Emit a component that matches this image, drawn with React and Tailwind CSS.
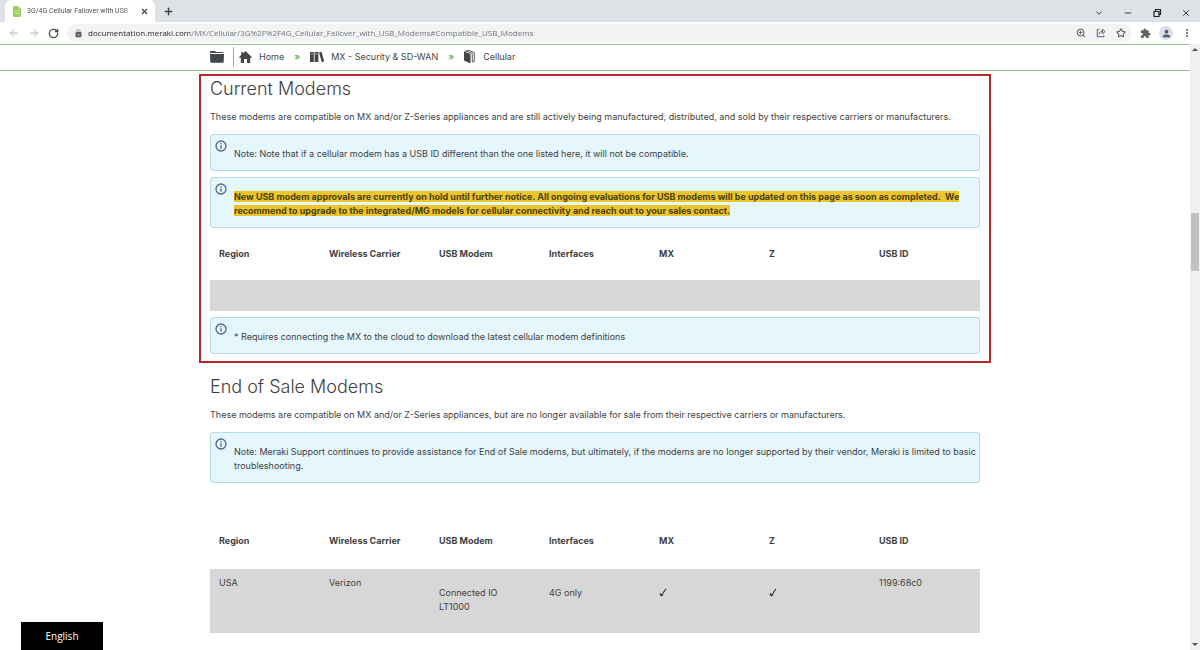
import {
  ArrowLeft,
  ArrowRight,
  RotateCw,
  X,
  Plus,
  Minus,
  ChevronDown,
  Star,
  ZoomIn
} from "lucide-react";
import { MdLock, MdExtension, MdPerson, MdMoreVert } from "react-icons/md";

const COLUMNS = ["Region", "Wireless Carrier", "USB Modem", "Interfaces", "MX", "Z", "USB ID"];

function TabStrip() {
  return (
    <div className="flex h-[22px] items-end justify-between bg-[#dee1e6] pl-[5px]">
      <div className="flex items-center">
        <div className="flex h-[22px] w-[150px] items-center rounded-t-md bg-white pl-2 pr-1.5">
          <svg viewBox="0 0 8 11" className="h-[11px] w-2 shrink-0" aria-hidden="true">
            <path d="M1 0h4.5L8 2.5V10a1 1 0 0 1-1 1H1a1 1 0 0 1-1-1V1a1 1 0 0 1 1-1z" fill="#9bcf62" />
            <path d="M5.5 0 8 2.5H5.5z" fill="#d3ecb8" />
            <path d="M1.5 5h5M1.5 7.5h5" stroke="#c9e8a8" strokeWidth="1" />
          </svg>
          <span className="ml-1.5 flex-1 whitespace-nowrap bg-[linear-gradient(90deg,#45494d_85%,#c4c6c8)] bg-clip-text font-[Roboto,sans-serif] text-[7px] text-transparent">
            3G/4G Cellular Failover with USB
          </span>
          <button aria-label="Close tab" className="ml-1 text-[#3c4043]">
            <X size={9} strokeWidth={3} />
          </button>
        </div>
        <button aria-label="New tab" className="ml-2 text-[#3c4043]">
          <Plus size={11} strokeWidth={3} />
        </button>
      </div>

      <div className="flex h-[18px] items-center gap-[19px] pr-[9px] text-[#222]">
        <button aria-label="Search tabs">
          <ChevronDown size={10} strokeWidth={2} />
        </button>
        <button aria-label="Minimize">
          <Minus size={10} strokeWidth={2} />
        </button>
        <button aria-label="Restore">
          <svg viewBox="0 0 10 10" className="size-[10px]" fill="none" stroke="currentColor" aria-hidden="true">
            <path d="M2 3.5h5v5H2zM3.5 3.5V1.5h5v5H7" strokeWidth="1.2" />
          </svg>
        </button>
        <button aria-label="Close window">
          <X size={10} strokeWidth={2} />
        </button>
      </div>
    </div>
  );
}

function Toolbar() {
  return (
    <div className="flex h-[22px] items-center bg-white pl-2 pr-[7px]">
      <div className="flex items-center gap-2">
        <button aria-label="Back" className="text-[#b5b7ba]">
          <ArrowLeft size={12} strokeWidth={2} />
        </button>
        <button aria-label="Forward" className="text-[#b5b7ba]">
          <ArrowRight size={12} strokeWidth={2} />
        </button>
        <button aria-label="Reload" className="text-[#4a4d51]">
          <RotateCw size={11} strokeWidth={3} />
        </button>
      </div>

      <div className="ml-2 flex h-[18px] flex-1 items-center rounded-full bg-[#f1f3f4] pl-[7px] pr-1.5 text-[#5f6368]">
        <MdLock size={9} />
        <input
          type="text"
          aria-label="Address"
          defaultValue="documentation.meraki.com/MX/Cellular/3G%2F%2F4G_Cellular_Failover_with_USB_Modems#Compatible_USB_Modems"
          className="ml-[5px] min-w-0 flex-1 bg-[linear-gradient(90deg,#202124_102px,#6a6e73_102px)] bg-clip-text font-['Open_Sans',sans-serif] text-[8px] text-transparent outline-none"
        />
        <div className="flex items-center gap-[10px]">
          <button aria-label="Zoom">
            <ZoomIn size={10} strokeWidth={2.5} />
          </button>
          <button aria-label="Share">
            <svg viewBox="0 0 12 12" className="size-[10px]" fill="none" stroke="currentColor" strokeWidth="1.2" aria-hidden="true">
              <path d="M4 2H1.5v8.500h8V8.500M3.500 7.500c.5-2.500 2-3.500 4.500-3.500M7.500 1.500 11 4.200 7.500 7z" />
            </svg>
          </button>
          <button aria-label="Bookmark">
            <Star size={10} strokeWidth={2.5} />
          </button>
        </div>
      </div>

      <div className="ml-2 flex items-center gap-2 text-[#5f6368]">
        <button aria-label="Extensions">
          <MdExtension size={11} />
        </button>
        <button aria-label="Profile" className="flex size-3.5 items-center justify-center rounded-full bg-[#dadfe8] text-[#4a5a78]">
          <MdPerson size={11} />
        </button>
        <button aria-label="Menu">
          <MdMoreVert size={12} />
        </button>
      </div>
    </div>
  );
}

function Separator() {
  return <span className="mx-[9px] px-px text-[9px] font-bold text-[#6cc04a]" aria-hidden="true">»</span>;
}

function Breadcrumbs() {
  return (
    <nav aria-label="Breadcrumb" className="border-y border-[#9dbf8b] bg-white">
      <div className="mx-auto flex h-[25px] max-w-[770px] items-center pb-0.5 text-[#444749]">
        <button aria-label="Contents" className="flex h-5 items-center border-r border-[#8cc07a] pr-[9px]">
          <svg viewBox="0 0 14 12" className="h-3 w-3.5" fill="#444749" aria-hidden="true">
            <path d="M0 2V1A1 1 0 0 1 1 0h4l1 1h6.500a1 1 0 0 1 1 1zM0 3h14l-.3 8a.8.8 0 0 1-.8.800H1.100a.8.8 0 0 1-.8-.8z" />
          </svg>
        </button>
        <a href="#home" className="ml-[5px] flex items-center gap-[7px]">
          <svg viewBox="0 0 13 12" className="h-3 w-[13px]" fill="#444749" aria-hidden="true">
            <path d="M6.500 0 13 6.200l-.8.900L11.200 6.500V12H8V8H5v4H1.800V6.500l-1 .6L0 6.200 2.200 4V1h1.600v1.500z" />
          </svg>
          Home
        </a>
        <Separator />
        <a href="#mx" className="flex items-center gap-[7px]">
          <svg viewBox="0 0 14 12" className="h-3 w-3.5" fill="#444749" aria-hidden="true">
            <path d="M0 1h3.800v10H0zM4.600 1h3.800v10H4.600zM9 1.600l2.500-.8L14.300 10.500l-2.500.8z" />
            <path d="M.8 3h2.200M5.400 3h2.200" stroke="#fff" strokeWidth=".6" />
          </svg>
          MX - Security &amp; SD-WAN
        </a>
        <Separator />
        <a href="#cellular" className="flex items-center gap-2">
          <svg viewBox="0 0 11 14" className="h-3.5 w-[11px]" aria-hidden="true">
            <path d="M0 1.500 6.500 4v9.500L0 10.500z" fill="#444749" />
            <path d="M.5 1.200 4.500.500 10.300 2.500V11.500L8.500 12M2.500 1.200 8.300 3.500V12" fill="none" stroke="#444749" strokeWidth=".9" />
          </svg>
          Cellular
        </a>
      </div>
    </nav>
  );
}

function Note({ children, className = "" }) {
  return (
    <div className={`flex rounded-[3px] border border-[#b5dce6] bg-[#e5f6fd] pb-[9px] pl-1 ${className}`}>
      <svg viewBox="0 0 12 12" className="mt-[5px] size-3 shrink-0" fill="none" stroke="#4a6a86" aria-hidden="true">
        <circle cx="6" cy="6" r="5" strokeWidth="1.300" />
        <path d="M6 5.200v3.600M6 3v1.300" strokeWidth="1.300" />
      </svg>
      <p className="ml-[7px] pt-3">{children}</p>
    </div>
  );
}

function ModemTable({ label, headHeight, children }) {
  return (
    <table aria-label={label} className="w-full table-fixed border-collapse text-left">
      <thead>
        <tr className={headHeight}>
          {COLUMNS.map((name) => (
            <th key={name} scope="col" className="pl-[9px] align-middle font-bold">
              {name}
            </th>
          ))}
        </tr>
      </thead>
      <tbody className="bg-[#d7d7d7]">{children}</tbody>
    </table>
  );
}

function Check() {
  return (
    <svg viewBox="0 0 8 9" className="mt-0.5 h-[9px] w-2" fill="none" stroke="#333" role="img" aria-label="Yes">
      <path d="M1 5.500 2.800 8" strokeWidth="1.600" />
      <path d="M2.800 8C3.800 5 5 3 7 .8" strokeWidth="1.100" />
    </svg>
  );
}

function ScrollBar() {
  return (
    <div className="flex w-2.5 shrink-0 flex-col items-center justify-between bg-[#f1f1f1] py-1" aria-hidden="true">
      <span className="border-x-[3px] border-b-[3px] border-x-transparent border-b-[#505050]" />
      <span className="mb-[210px] h-[58px] w-2 bg-[#c1c1c1]" />
      <span className="border-x-[3px] border-t-[3px] border-x-transparent border-t-[#505050]" />
    </div>
  );
}

export default function App() {
  return (
    <div className="relative flex h-screen flex-col overflow-hidden bg-white font-[Inter,sans-serif] text-[9px] leading-[14px] text-[#3e4143]">
      <TabStrip />
      <Toolbar />

      <div className="flex min-h-0 flex-1">
        <div className="min-w-0 flex-1">
          <Breadcrumbs />

          <main className="mx-auto mt-[3px] max-w-[792px]">
            {/* Current modems */}
            <section className="border-2 border-[#b5272d] px-[9px] pb-[7px] pt-px">
              <h2 className="text-[18px] font-light leading-6">Current Modems</h2>
              <p className="mt-[9px]">
                These modems are compatible on MX and/or Z-Series appliances and are still actively being manufactured, distributed, and sold by their respective carriers or manufacturers.
              </p>
              <Note className="mt-2.5">
                Note: Note that if a cellular modem has a USB ID different than the one listed here, it will not be compatible.
              </Note>
              <Note className="mt-1.5">
                <strong className="bg-[#ebc52c] font-bold text-[#4b3f10]">
                  New USB modem approvals are currently on hold until further notice. All ongoing evaluations for USB modems will be updated on this page as soon as completed.&nbsp; We recommend to upgrade to the integrated/MG models for cellular connectivity and reach out to your sales contact.
                </strong>
              </Note>
              <ModemTable label="Current modems" headHeight="h-[52px]">
                <tr className="h-[31px]">
                  <td colSpan={7}></td>
                </tr>
              </ModemTable>
              <Note className="mt-1.5">
                * Requires connecting the MX to the cloud to download the latest cellular modem definitions
              </Note>
            </section>

            {/* End of sale modems */}
            <section className="mt-3 px-[11px]">
              <h2 className="text-[18px] font-light leading-6">End of Sale Modems</h2>
              <p className="mt-[9px]">
                These modems are compatible on MX and/or Z-Series appliances, but are no longer available for sale from their respective carriers or manufacturers.
              </p>
              <Note className="mb-[30px] mt-2.5">
                Note: Meraki Support continues to provide assistance for End of Sale modems, but ultimately, if the modems are no longer supported by their vendor, Meraki is limited to basic troubleshooting.
              </Note>
              <ModemTable label="End of sale modems" headHeight="h-14">
                <tr className="h-16 align-top">
                  <td className="pl-[9px] pt-[7px]">USA</td>
                  <td className="pl-[9px] pt-[7px]">Verizon</td>
                  <td className="pl-[9px] pr-6 pt-[17px]">Connected IO LT1000</td>
                  <td className="pl-[9px] pt-[17px]">4G only</td>
                  <td className="pl-[9px] pt-[17px]"><Check /></td>
                  <td className="pl-[9px] pt-[17px]"><Check /></td>
                  <td className="pl-[9px] pt-[7px]">1199:68c0</td>
                </tr>
              </ModemTable>
            </section>
          </main>
        </div>
        <ScrollBar />
      </div>

      <button className="absolute bottom-0 left-[21px] h-7 w-[82px] bg-black font-['Open_Sans',sans-serif] text-[10px] text-white">
        English
      </button>
    </div>
  );
}
